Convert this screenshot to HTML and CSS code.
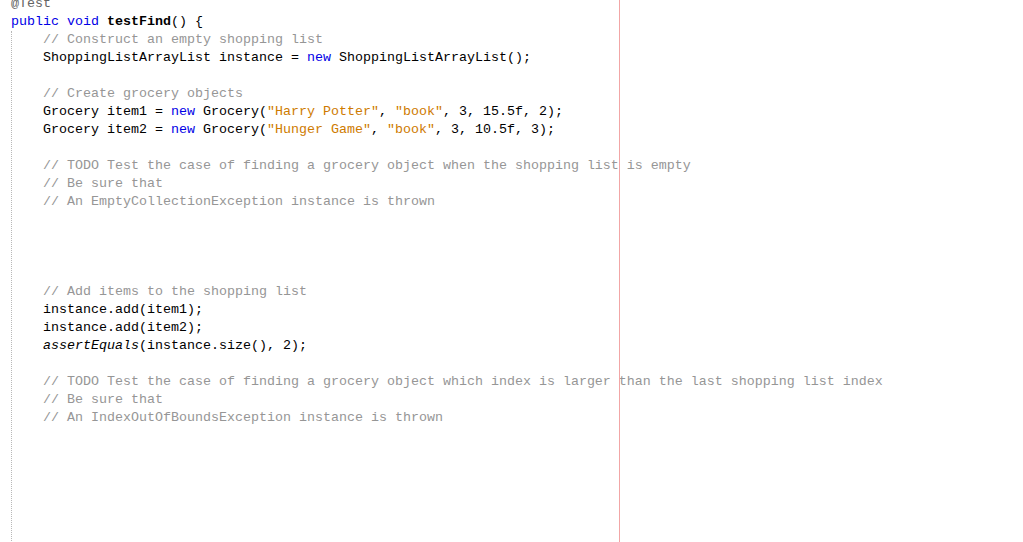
FILE: index.html
```html
<!DOCTYPE html>
<html>
<head>
<meta charset="utf-8">
<link rel="stylesheet" href="styles.css">
</head>
<body>
<div class="editor">
<div class="code">
<div class="line ann">@Test</div>
<div class="line"><span class="kw">public</span> <span class="kw">void</span> <b class="fn">testFind</b>() {</div>
<div class="body">
<div class="line cm">// Construct an empty shopping list</div>
<div class="line">ShoppingListArrayList instance = <span class="kw">new</span> ShoppingListArrayList();</div>
<div class="line"></div>
<div class="line cm">// Create grocery objects</div>
<div class="line">Grocery item1 = <span class="kw">new</span> Grocery(<span class="str">"Harry Potter"</span>, <span class="str">"book"</span>, 3, 15.5f, 2);</div>
<div class="line">Grocery item2 = <span class="kw">new</span> Grocery(<span class="str">"Hunger Game"</span>, <span class="str">"book"</span>, 3, 10.5f, 3);</div>
<div class="line"></div>
<div class="line cm">// TODO Test the case of finding a grocery object when the shopping list is empty</div>
<div class="line cm">// Be sure that</div>
<div class="line cm">// An EmptyCollectionException instance is thrown</div>
<div class="line"></div>
<div class="line"></div>
<div class="line"></div>
<div class="line"></div>
<div class="line cm">// Add items to the shopping list</div>
<div class="line">instance.add(item1);</div>
<div class="line">instance.add(item2);</div>
<div class="line"><i>assertEquals</i>(instance.size(), 2);</div>
<div class="line"></div>
<div class="line cm">// TODO Test the case of finding a grocery object which index is larger than the last shopping list index</div>
<div class="line cm">// Be sure that</div>
<div class="line cm">// An IndexOutOfBoundsException instance is thrown</div>
</div>
</div>
</div>
</body>
</html>
```
FILE: styles.css
```css
html, body {
  margin: 0;
  padding: 0;
  background: #ffffff;
  overflow: hidden;
}
.editor {
  width: 1023px;
  height: 542px;
  overflow: hidden;
  background: linear-gradient(to right, transparent 619px, #f2a6a6 619px, #f2a6a6 620px, transparent 620px);
}
.code {
  margin-top: -5px;
  padding-left: 11px;
  font-family: "Liberation Mono", "Courier New", monospace;
  font-size: 13.333px;
  line-height: 18px;
  color: #000000;
}
.line {
  height: 18px;
  white-space: pre;
}
.body {
  border-left: 1px dotted #b8b8b8;
  padding-left: 31px;
  min-height: 540px;
}
.kw {
  color: #0000e6;
}
.fn {
  font-weight: bold;
}
.cm {
  color: #969696;
}
.str {
  color: #ce7b00;
}
.ann {
  color: #646464;
}
i {
  font-style: italic;
}
```
